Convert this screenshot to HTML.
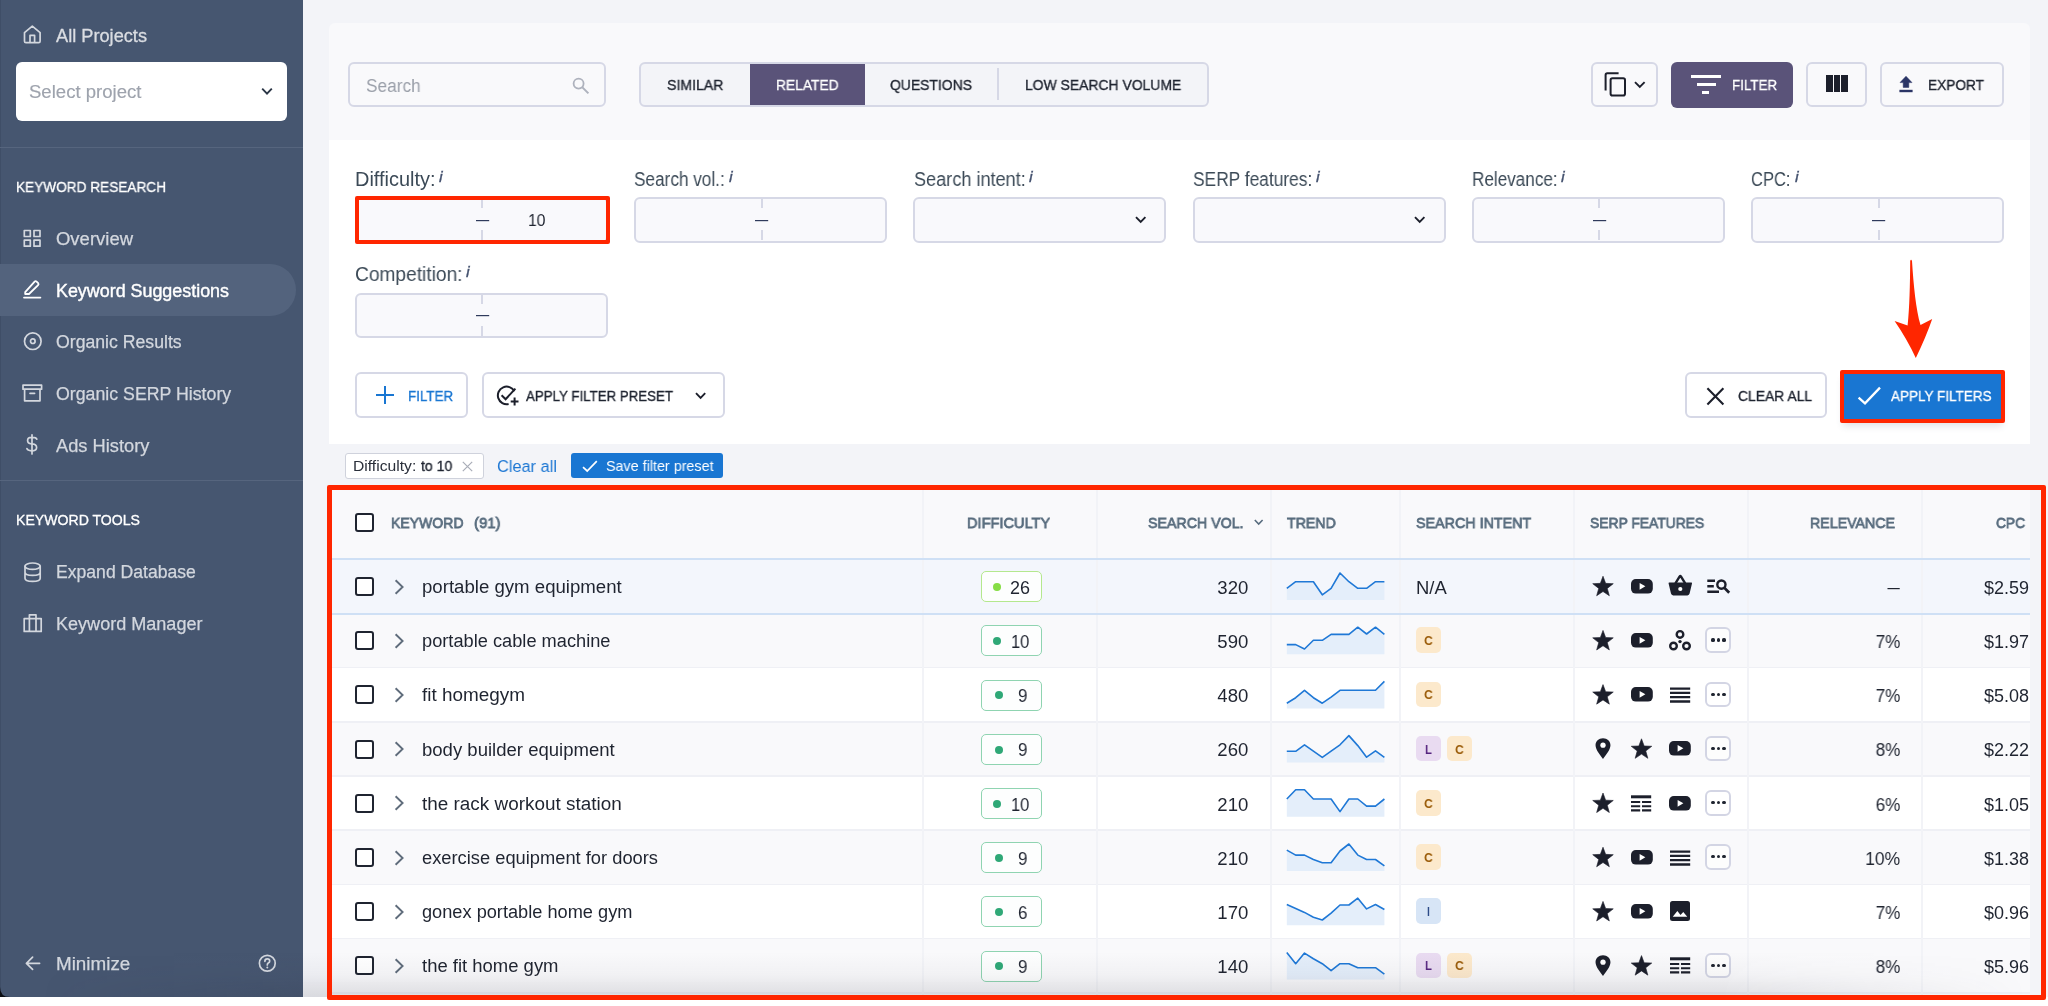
<!DOCTYPE html>
<html lang="en">
<head>
<meta charset="utf-8">
<title>Keyword Suggestions</title>
<style>
*{box-sizing:border-box;margin:0;padding:0}
html,body{width:2048px;height:1006px;overflow:hidden;background:#fff}
body{font-family:"Liberation Sans",sans-serif;color:#1f2430;position:relative}
.a{position:absolute}
.t{position:absolute;white-space:nowrap;line-height:1;display:block;will-change:transform}
svg{position:absolute;overflow:visible}
#app{position:absolute;left:0;top:0;width:2048px;height:997px;background:#f3f4f8;overflow:hidden}
#side{position:absolute;left:0;top:0;width:303px;height:997px;background:#465670}
.inp{position:absolute;height:45.6px;width:253px;border:2px solid #d6d8e6;border-radius:6px;background:#f9f9fc}
.tick{position:absolute;width:2px;background:#d6d8e6}
.dash{position:absolute;height:1.7px;width:13px;background:#2f3a5c}
.btn{position:absolute;border:2px solid #d6d8e6;border-radius:6px;background:#fff}
.cb{position:absolute;width:19px;height:19px;border:2px solid #1f2430;border-radius:3px;background:#fff}
.row{position:absolute;left:332px;width:1698px}
.vs{position:absolute;width:2px;top:490px;height:507px;background:#f2f3f7}
.db{position:absolute;width:61.2px;height:31px;border:1.5px solid #8fd4b1;border-radius:5px;background:#fdfefe}
.dot{position:absolute;width:8px;height:8px;border-radius:50%;background:#2fa877}
.ib{position:absolute;width:25.8px;height:25.8px;border-radius:5px}
.more{position:absolute;width:25.6px;height:25.6px;border:2px solid #d3d5e4;border-radius:6px;background:rgba(255,255,255,.6)}
.more i{position:absolute;top:9.1px;width:3.2px;height:3.2px;border-radius:50%;background:#1f2430}
</style>
</head>
<body>
<div id="app">
<div id="side">
<div class="a" style="left:0;top:0;width:1px;height:997px;background:#3f4e67"></div>
<div class="a" style="left:0;top:264px;width:296px;height:52px;background:#53637d;border-radius:0 26px 26px 0"></div>
<div class="a" style="left:0;top:147px;width:303px;height:1px;background:#56657e"></div>
<div class="a" style="left:0;top:480px;width:303px;height:1px;background:#56657e"></div>
<div class="a" style="left:16px;top:62px;width:271px;height:59px;background:#fff;border-radius:6px"></div>
<svg style="left:261px;top:87px" width="12" height="9" viewBox="0 0 12 9"><path d="M1.2 1.6 L6 6.6 L10.8 1.6" fill="none" stroke="#2b3646" stroke-width="1.9"/></svg>
<span class="t" style="font-size:17.6px;color:#dadde2;top:28px;-webkit-text-stroke:0.3px #dadde2;left:56.00px;transform-origin:0 50%;transform:scaleX(1.0341);">All Projects</span>
<span class="t" style="font-size:17.6px;color:#9ea3ad;top:84px;-webkit-text-stroke:0.15px #9ea3ad;left:28.60px;transform-origin:0 50%;transform:scaleX(1.0545);">Select project</span>
<span class="t" style="font-size:14px;color:#ffffff;top:180px;-webkit-text-stroke:0.3px #ffffff;left:15.60px;transform-origin:0 50%;transform:scaleX(0.9738);">KEYWORD RESEARCH</span>
<span class="t" style="font-size:17.6px;color:#d3d7de;top:231px;-webkit-text-stroke:0.25px #d3d7de;left:56.00px;transform-origin:0 50%;transform:scaleX(1.0501);">Overview</span>
<span class="t" style="font-size:17.6px;color:#ffffff;top:283px;-webkit-text-stroke:0.4px #ffffff;left:56.00px;transform-origin:0 50%;transform:scaleX(1.0165);">Keyword Suggestions</span>
<span class="t" style="font-size:17.6px;color:#d3d7de;top:334px;-webkit-text-stroke:0.25px #d3d7de;left:56.00px;transform-origin:0 50%;transform:scaleX(1.0042);">Organic Results</span>
<span class="t" style="font-size:17.6px;color:#d3d7de;top:386px;-webkit-text-stroke:0.25px #d3d7de;left:56.00px;transform-origin:0 50%;transform:scaleX(1.0085);">Organic SERP History</span>
<span class="t" style="font-size:17.6px;color:#d3d7de;top:438px;-webkit-text-stroke:0.25px #d3d7de;left:56.00px;transform-origin:0 50%;transform:scaleX(1.0383);">Ads History</span>
<span class="t" style="font-size:14px;color:#ffffff;top:513px;-webkit-text-stroke:0.3px #ffffff;left:15.60px;transform-origin:0 50%;transform:scaleX(1.0066);">KEYWORD TOOLS</span>
<span class="t" style="font-size:17.6px;color:#d3d7de;top:564px;-webkit-text-stroke:0.25px #d3d7de;left:56.20px;transform-origin:0 50%;">Expand Database</span>
<span class="t" style="font-size:17.6px;color:#d3d7de;top:616px;-webkit-text-stroke:0.25px #d3d7de;left:56.20px;transform-origin:0 50%;transform:scaleX(1.0260);">Keyword Manager</span>
<span class="t" style="font-size:17.6px;color:#d3d7de;top:956px;-webkit-text-stroke:0.25px #d3d7de;left:56.20px;transform-origin:0 50%;transform:scaleX(1.0705);">Minimize</span>
<svg style="left:23px;top:25px" width="19" height="19" viewBox="0 0 19 19"><path d="M1.5 7.6 L9.3 1.2 L17.1 7.6 V16.2 Q17.1 17.6 15.7 17.6 H2.9 Q1.5 17.6 1.5 16.2 Z M7 17.6 V10.4 H11.6 V17.6" fill="none" stroke="#d3d7de" stroke-width="1.7" stroke-linejoin="round" stroke-linecap="round"/></svg>
<svg style="left:23px;top:229px" width="19" height="19" viewBox="0 0 19 19"><path d="M1.3 1.5h6v6h-6z M11 1.5h6v6h-6z M1.3 11.2h6v6h-6z M11 11.2h6v6h-6z" fill="none" stroke="#d3d7de" stroke-width="1.7" stroke-linejoin="round" stroke-linecap="round" stroke-linejoin="miter"/></svg>
<svg style="left:23px;top:279px" width="19" height="20" viewBox="0 0 19 20"><path d="M2.2 13.2 L11.6 2.6 Q12.6 1.6 13.6 2.6 L15.2 4.2 Q16 5.2 15.1 6.1 L6 15 H2.2 Z M1 18.6 H17.4" fill="none" stroke="#ffffff" stroke-width="1.8" stroke-linejoin="round" stroke-linecap="round"/></svg>
<svg style="left:22.5px;top:332px" width="20" height="19" viewBox="0 0 20 19"><circle cx="9.8" cy="9.2" r="8.3" fill="none" stroke="#d3d7de" stroke-width="1.7" stroke-linejoin="round" stroke-linecap="round"/><circle cx="9.8" cy="9.2" r="2.3" fill="none" stroke="#d3d7de" stroke-width="1.7" stroke-linejoin="round" stroke-linecap="round"/></svg>
<svg style="left:22px;top:383.5px" width="21" height="19" viewBox="0 0 21 19"><path d="M1 1.2 H19.6 V5.2 H1 Z M2.6 5.2 V16.8 H18 V5.2 M8 9.3 H12.6" fill="none" stroke="#d3d7de" stroke-width="1.7" stroke-linejoin="round" stroke-linecap="round" stroke-linejoin="miter"/></svg>
<svg style="left:25px;top:434px" width="14" height="21" viewBox="0 0 14 21"><path d="M7 0.8 V20 M11.8 5.2 Q11 3.4 7.4 3.4 H6.4 Q2.6 3.4 2.6 6.6 Q2.6 9.6 6.4 9.9 H7.6 Q11.6 10.3 11.6 13.6 Q11.6 16.8 7.6 16.8 H6.4 Q2.6 16.8 1.9 14.6" fill="none" stroke="#d3d7de" stroke-width="1.7" stroke-linejoin="round" stroke-linecap="round"/></svg>
<svg style="left:22.5px;top:561.5px" width="20" height="21" viewBox="0 0 20 21"><ellipse cx="9.6" cy="4.2" rx="7.6" ry="3.2" fill="none" stroke="#d3d7de" stroke-width="1.7" stroke-linejoin="round" stroke-linecap="round"/><path d="M2 4.2 V16.2 Q2 19.4 9.6 19.4 Q17.2 19.4 17.2 16.2 V4.2 M2 10.2 Q2 13.4 9.6 13.4 Q17.2 13.4 17.2 10.2" fill="none" stroke="#d3d7de" stroke-width="1.7" stroke-linejoin="round" stroke-linecap="round"/></svg>
<svg style="left:22.5px;top:613px" width="20" height="20" viewBox="0 0 20 20"><path d="M1.2 5.6 H18.2 V18.4 H1.2 Z M6.4 5.6 V1.8 H13 V5.6 M6.4 5.6 V18.4 M13 5.6 V18.4" fill="none" stroke="#d3d7de" stroke-width="1.7" stroke-linejoin="round" stroke-linecap="round"/></svg>
<svg style="left:24.5px;top:956px" width="16" height="15" viewBox="0 0 16 15"><path d="M14.6 7.3 H1.6 M7.6 1.2 L1.4 7.3 L7.6 13.4" fill="none" stroke="#d3d7de" stroke-width="1.7" stroke-linejoin="round" stroke-linecap="round"/></svg>
<svg style="left:257.5px;top:953.5px" width="19" height="19" viewBox="0 0 19 19"><circle cx="9.3" cy="9.2" r="7.9" fill="none" stroke="#d3d7de" stroke-width="1.7" stroke-linejoin="round" stroke-linecap="round"/><path d="M6.9 7.3 Q6.9 4.9 9.3 4.9 Q11.7 4.9 11.7 7 Q11.7 8.4 10.3 9.1 Q9.3 9.7 9.3 10.9" fill="none" stroke="#d3d7de" stroke-width="1.7" stroke-linejoin="round" stroke-linecap="round" stroke-width="1.5"/><circle cx="9.3" cy="13.4" r="1" fill="#d3d7de"/></svg>
</div>
<svg style="left:0;top:987px" width="10" height="10" viewBox="0 0 10 10"><path d="M0 0 V10 H10 Q0 10 0 0 Z" fill="#0b0d12"/></svg>
<div class="a" style="left:329px;top:23px;width:1701px;height:117px;background:#f9f9fb;border-radius:6px 6px 0 0"></div>
<div class="a" style="left:329px;top:139.5px;width:1701px;height:304.5px;background:#fff"></div>
<div class="a" style="left:347.8px;top:61.7px;width:258.4px;height:45.7px;border:2px solid #d6d8e6;border-radius:6px;background:#f9f9fb"></div>
<span class="t" style="font-size:18.8px;color:#9a9fa9;top:77px;left:366.00px;transform-origin:0 50%;transform:scaleX(0.9191);">Search</span>
<svg style="left:572px;top:77px" width="18" height="18" viewBox="0 0 18 18"><circle cx="6.6" cy="6.6" r="5" fill="none" stroke="#aeb2bd" stroke-width="1.8"/><path d="M10.4 10.4 L16.4 16.4" stroke="#aeb2bd" stroke-width="2"/></svg>
<div class="a" style="left:638.8px;top:61.7px;width:570.3px;height:45.7px;border:2px solid #d6d8e6;border-radius:6px;background:#f3f4f8"></div>
<div class="a" style="left:750px;top:63.7px;width:115px;height:41.7px;background:#5a5379"></div>
<div class="a" style="left:997px;top:68px;width:1.5px;height:32px;background:#d6d8e6"></div>
<span class="t" style="font-size:14.6px;color:#1f2430;top:78px;-webkit-text-stroke:0.35px #1f2430;left:666.50px;transform-origin:0 50%;transform:scaleX(0.9676);">SIMILAR</span>
<span class="t" style="font-size:14.6px;color:#ffffff;top:78px;-webkit-text-stroke:0.3px #ffffff;left:776.00px;transform-origin:0 50%;transform:scaleX(0.9436);">RELATED</span>
<span class="t" style="font-size:14.6px;color:#1f2430;top:78px;-webkit-text-stroke:0.35px #1f2430;left:890.00px;transform-origin:0 50%;transform:scaleX(0.9540);">QUESTIONS</span>
<span class="t" style="font-size:14.6px;color:#1f2430;top:78px;-webkit-text-stroke:0.35px #1f2430;left:1024.50px;transform-origin:0 50%;transform:scaleX(0.9538);">LOW SEARCH VOLUME</span>
<div class="btn" style="left:1591px;top:61.6px;width:67.2px;height:45.6px;background:#f9f9fb"></div>
<svg style="left:1604px;top:72px" width="23" height="25" viewBox="0 0 23 25"><path d="M1.6 18.4 V3 Q1.6 1.3 3.3 1.3 H14.6" fill="none" stroke="#1c1f2b" stroke-width="2"/><rect x="6.6" y="6.2" width="14.4" height="17.4" rx="1.8" fill="none" stroke="#1c1f2b" stroke-width="2"/></svg>
<svg style="left:1633.5px;top:80.5px" width="12" height="8" viewBox="0 0 12 8"><path d="M1 1.2 L5.8 6 L10.6 1.2" fill="none" stroke="#1c1f2b" stroke-width="1.9"/></svg>
<div class="a" style="left:1671px;top:61.5px;width:122px;height:46px;background:#5a5379;border-radius:6px"></div>
<div class="a" style="left:1691px;top:75px;width:29.5px;height:3px;background:#fff"></div>
<div class="a" style="left:1696.5px;top:83px;width:19px;height:3px;background:#fff"></div>
<div class="a" style="left:1702px;top:91px;width:7px;height:3px;background:#fff"></div>
<span class="t" style="font-size:14.6px;color:#ffffff;top:78px;-webkit-text-stroke:0.3px #ffffff;left:1732.00px;transform-origin:0 50%;transform:scaleX(0.9146);">FILTER</span>
<div class="btn" style="left:1805.8px;top:61.6px;width:60.9px;height:45.6px;background:#f9f9fb"></div>
<div class="a" style="left:1826.0px;top:74.8px;width:6.6px;height:17.2px;background:#1c1f2b"></div>
<div class="a" style="left:1833.6px;top:74.8px;width:6.6px;height:17.2px;background:#1c1f2b"></div>
<div class="a" style="left:1841.2px;top:74.8px;width:6.6px;height:17.2px;background:#1c1f2b"></div>
<div class="btn" style="left:1879.8px;top:61.6px;width:124.4px;height:45.6px;background:#f9f9fb"></div>
<svg style="left:1898.5px;top:75.5px" width="14" height="17" viewBox="0 0 14 17"><path d="M7 0.2 L13 6.6 H9.8 V11.4 H4.2 V6.6 H1 Z" fill="#2b3566" stroke="#2b3566" stroke-width="0.5" stroke-linejoin="round"/><rect x="0.4" y="13.8" width="13.2" height="2.4" fill="#2b3566"/></svg>
<span class="t" style="font-size:14.6px;color:#1f2430;top:78px;-webkit-text-stroke:0.35px #1f2430;left:1928.00px;transform-origin:0 50%;transform:scaleX(0.9372);">EXPORT</span>
<span class="t" style="font-size:19.6px;color:#3c4a57;top:170px;left:355.15px;transform-origin:0 50%;transform:scaleX(1.0174);">Difficulty:</span>
<span class="t" style="font-size:15px;color:#44526f;top:169px;font-style:italic;-webkit-text-stroke:0.3px #44526f;left:439.25px;transform-origin:0 50%;transform:scaleX(1.1000);">i</span>
<span class="t" style="font-size:19.6px;color:#3c4a57;top:170px;left:634.40px;transform-origin:0 50%;transform:scaleX(0.8771);">Search vol.:</span>
<span class="t" style="font-size:15px;color:#44526f;top:169px;font-style:italic;-webkit-text-stroke:0.3px #44526f;left:728.75px;transform-origin:0 50%;transform:scaleX(1.1000);">i</span>
<span class="t" style="font-size:19.6px;color:#3c4a57;top:170px;left:913.65px;transform-origin:0 50%;transform:scaleX(0.9243);">Search intent:</span>
<span class="t" style="font-size:15px;color:#44526f;top:169px;font-style:italic;-webkit-text-stroke:0.3px #44526f;left:1029.00px;transform-origin:0 50%;transform:scaleX(1.1000);">i</span>
<span class="t" style="font-size:19.6px;color:#3c4a57;top:170px;left:1192.90px;transform-origin:0 50%;transform:scaleX(0.8853);">SERP features:</span>
<span class="t" style="font-size:15px;color:#44526f;top:169px;font-style:italic;-webkit-text-stroke:0.3px #44526f;left:1315.75px;transform-origin:0 50%;transform:scaleX(1.1000);">i</span>
<span class="t" style="font-size:19.6px;color:#3c4a57;top:170px;left:1472.15px;transform-origin:0 50%;transform:scaleX(0.8732);">Relevance:</span>
<span class="t" style="font-size:15px;color:#44526f;top:169px;font-style:italic;-webkit-text-stroke:0.3px #44526f;left:1561.35px;transform-origin:0 50%;transform:scaleX(1.1000);">i</span>
<span class="t" style="font-size:19.6px;color:#3c4a57;top:170px;left:1751.40px;transform-origin:0 50%;transform:scaleX(0.8435);">CPC:</span>
<span class="t" style="font-size:15px;color:#44526f;top:169px;font-style:italic;-webkit-text-stroke:0.3px #44526f;left:1794.50px;transform-origin:0 50%;transform:scaleX(1.1000);">i</span>
<span class="t" style="font-size:19.6px;color:#3c4a57;top:265px;left:355.10px;transform-origin:0 50%;transform:scaleX(0.9773);">Competition:</span>
<span class="t" style="font-size:15px;color:#44526f;top:264px;font-style:italic;-webkit-text-stroke:0.3px #44526f;left:466.40px;transform-origin:0 50%;transform:scaleX(1.1000);">i</span>
<div class="inp" style="left:354.75px;top:197px"></div>
<div class="tick" style="left:481.25px;top:199px;height:9px"></div>
<div class="tick" style="left:481.25px;top:230px;height:10px"></div>
<span class="t" style="font-size:17.6px;color:#2f3a5c;top:211px;left:475.65px;transform-origin:0 50%;transform:scaleX(1.3474);">–</span>
<div class="inp" style="left:634px;top:197px"></div>
<div class="tick" style="left:760.5px;top:199px;height:9px"></div>
<div class="tick" style="left:760.5px;top:230px;height:10px"></div>
<span class="t" style="font-size:17.6px;color:#2f3a5c;top:211px;left:754.90px;transform-origin:0 50%;transform:scaleX(1.3474);">–</span>
<div class="inp" style="left:913.25px;top:197px"></div>
<svg style="left:1134.75px;top:215.6px" width="12" height="8" viewBox="0 0 12 8"><path d="M1 1.2 L5.7 5.9 L10.4 1.2" fill="none" stroke="#1c1f2b" stroke-width="1.9"/></svg>
<div class="inp" style="left:1192.5px;top:197px"></div>
<svg style="left:1414.0px;top:215.6px" width="12" height="8" viewBox="0 0 12 8"><path d="M1 1.2 L5.7 5.9 L10.4 1.2" fill="none" stroke="#1c1f2b" stroke-width="1.9"/></svg>
<div class="inp" style="left:1471.75px;top:197px"></div>
<div class="tick" style="left:1598.25px;top:199px;height:9px"></div>
<div class="tick" style="left:1598.25px;top:230px;height:10px"></div>
<span class="t" style="font-size:17.6px;color:#2f3a5c;top:211px;left:1592.65px;transform-origin:0 50%;transform:scaleX(1.3474);">–</span>
<div class="inp" style="left:1751px;top:197px"></div>
<div class="tick" style="left:1877.5px;top:199px;height:9px"></div>
<div class="tick" style="left:1877.5px;top:230px;height:10px"></div>
<span class="t" style="font-size:17.6px;color:#2f3a5c;top:211px;left:1871.90px;transform-origin:0 50%;transform:scaleX(1.3474);">–</span>
<div class="inp" style="left:354.75px;top:292.5px"></div>
<div class="tick" style="left:481.25px;top:294.5px;height:9px"></div>
<div class="tick" style="left:481.25px;top:325.5px;height:10px"></div>
<span class="t" style="font-size:17.6px;color:#2f3a5c;top:306px;left:475.65px;transform-origin:0 50%;transform:scaleX(1.3474);">–</span>
<div class="a" style="left:355px;top:195.8px;width:255px;height:48.6px;border:4.2px solid #ff2600;border-radius:2px"></div>
<span class="t" style="font-size:16.8px;color:#1f2430;top:213px;left:528.00px;transform-origin:0 50%;transform:scaleX(0.9372);">10</span>
<div class="btn" style="left:354.8px;top:372.1px;width:113.4px;height:46px"></div>
<div class="a" style="left:376px;top:393.8px;width:18px;height:2.5px;background:#1976d2"></div><div class="a" style="left:383.8px;top:386px;width:2.5px;height:18px;background:#1976d2"></div>
<span class="t" style="font-size:14.6px;color:#1976d2;top:389px;-webkit-text-stroke:0.35px #1976d2;left:407.50px;transform-origin:0 50%;transform:scaleX(0.9146);">FILTER</span>
<div class="btn" style="left:481.5px;top:372.1px;width:243.4px;height:46px"></div>
<svg style="left:496px;top:385px" width="24" height="22" viewBox="0 0 24 22"><path d="M18.4 6.2 A8.8 8.8 0 1 0 12.6 19" fill="none" stroke="#1c1f2b" stroke-width="2"/><path d="M5.6 10.2 L9.6 14.2 L19.4 3.6" fill="none" stroke="#1c1f2b" stroke-width="2"/><path d="M18.6 12.6 V20.4 M14.7 16.5 H22.5" stroke="#1c1f2b" stroke-width="2"/></svg>
<span class="t" style="font-size:14.6px;color:#1f2430;top:389px;-webkit-text-stroke:0.35px #1f2430;left:526.00px;transform-origin:0 50%;transform:scaleX(0.9107);">APPLY FILTER PRESET</span>
<svg style="left:694.5px;top:391.5px" width="12" height="8" viewBox="0 0 12 8"><path d="M1 1.2 L5.6 5.8 L10.2 1.2" fill="none" stroke="#1c1f2b" stroke-width="1.9"/></svg>
<div class="btn" style="left:1685.3px;top:372.1px;width:141.4px;height:46px"></div>
<svg style="left:1706px;top:386.5px" width="19" height="19" viewBox="0 0 19 19"><path d="M1.4 1.2 L17.4 17.6 M17.4 1.2 L1.4 17.6" stroke="#1c1f2b" stroke-width="2.1"/></svg>
<span class="t" style="font-size:14.6px;color:#1f2430;top:389px;-webkit-text-stroke:0.35px #1f2430;left:1737.75px;transform-origin:0 50%;transform:scaleX(0.9501);">CLEAR ALL</span>
<div class="a" style="left:1840px;top:370.4px;width:165.4px;height:52.4px;background:#1976d2;border:4px solid #ff2600;border-radius:2px;box-shadow:0 6px 7px -3px rgba(60,70,100,.16)"></div>
<svg style="left:1857px;top:386px" width="25" height="20" viewBox="0 0 25 20"><path d="M1.6 11.6 L8 17.4 L23 1.6" fill="none" stroke="#fff" stroke-width="2.3"/></svg>
<span class="t" style="font-size:14.6px;color:#ffffff;top:389px;-webkit-text-stroke:0.3px #ffffff;left:1891.00px;transform-origin:0 50%;transform:scaleX(0.9247);">APPLY FILTERS</span>
<svg style="left:1890px;top:255px" width="50" height="108" viewBox="0 0 50 108"><path d="M20.2 6 Q21 3.6 22 6 C23.5 30 26 55 30.5 70 L42.2 64 Q36 82 25.8 103 Q17 84 4.6 66 L17.6 70.5 C19.6 52 20 30 20.2 6 Z" fill="#ff2600"/></svg>
<div class="a" style="left:345px;top:453px;width:139px;height:25.5px;border:1px solid #cfd2dc;border-radius:3px;background:#fff"></div>
<span class="t" style="font-size:14.8px;color:#2a2f3a;top:459px;left:352.50px;transform-origin:0 50%;transform:scaleX(1.0583);">Difficulty:</span>
<span class="t" style="font-size:14.8px;color:#1f2430;top:459px;-webkit-text-stroke:0.35px #1f2430;left:421.25px;transform-origin:0 50%;transform:scaleX(0.9492);">to 10</span>
<svg style="left:462px;top:460.5px" width="11" height="11" viewBox="0 0 11 11"><path d="M0.8 0.8 L10.2 10.2 M10.2 0.8 L0.8 10.2" stroke="#a9adb8" stroke-width="1.2"/></svg>
<span class="t" style="font-size:17.2px;color:#1b76d3;top:458px;left:497.00px;transform-origin:0 50%;transform:scaleX(0.9517);">Clear all</span>
<div class="a" style="left:571px;top:453px;width:151.8px;height:25.4px;background:#1976d2;border-radius:3px"></div>
<svg style="left:582px;top:459.5px" width="16" height="13" viewBox="0 0 16 13"><path d="M1 7.2 L5.2 11 L14.8 1.2" fill="none" stroke="#fff" stroke-width="1.7"/></svg>
<span class="t" style="font-size:14.8px;color:#ffffff;top:459px;left:605.75px;transform-origin:0 50%;transform:scaleX(0.9682);">Save filter preset</span>
<div class="a" style="left:332px;top:490px;width:1698px;height:68px;background:#f9f9fb"></div>
<div class="row" style="top:560.0px;height:55.2px;background:#f3f6fc"></div>
<div class="row" style="top:614.2px;height:55.2px;background:#f9f9fb"></div>
<div class="row" style="top:668.4px;height:55.2px;background:#ffffff"></div>
<div class="row" style="top:722.6px;height:55.2px;background:#f9f9fb"></div>
<div class="row" style="top:776.8px;height:55.2px;background:#ffffff"></div>
<div class="row" style="top:831.0px;height:55.2px;background:#f9f9fb"></div>
<div class="row" style="top:885.2px;height:55.2px;background:#ffffff"></div>
<div class="row" style="top:939.4px;height:55.2px;background:#f9f9fb"></div>
<div class="a" style="left:332px;top:666.8px;width:1698px;height:1.6px;background:#eff0f5"></div>
<div class="a" style="left:332px;top:721.0px;width:1698px;height:1.6px;background:#eff0f5"></div>
<div class="a" style="left:332px;top:775.2px;width:1698px;height:1.6px;background:#eff0f5"></div>
<div class="a" style="left:332px;top:829.4px;width:1698px;height:1.6px;background:#eff0f5"></div>
<div class="a" style="left:332px;top:883.6px;width:1698px;height:1.6px;background:#eff0f5"></div>
<div class="a" style="left:332px;top:937.8px;width:1698px;height:1.6px;background:#eff0f5"></div>
<div class="a" style="left:332px;top:992.0px;width:1698px;height:1.6px;background:#eff0f5"></div>
<div class="vs" style="left:922px"></div>
<div class="vs" style="left:1096px"></div>
<div class="vs" style="left:1270px"></div>
<div class="vs" style="left:1399px"></div>
<div class="vs" style="left:1573px"></div>
<div class="vs" style="left:1747px"></div>
<div class="vs" style="left:1921px"></div>
<div class="a" style="left:332px;top:557.6px;width:1698px;height:2px;background:#cfe0f5"></div>
<div class="a" style="left:332px;top:613px;width:1698px;height:2px;background:#cfe0f5"></div>
<div class="cb" style="left:355px;top:513px"></div>
<span class="t" style="font-size:15.4px;color:#586c7e;top:515px;-webkit-text-stroke:0.8px #586c7e;left:391.25px;transform-origin:0 50%;transform:scaleX(0.9116);">KEYWORD</span>
<span class="t" style="font-size:15.4px;color:#586c7e;top:515px;-webkit-text-stroke:0.8px #586c7e;left:474.00px;transform-origin:0 50%;transform:scaleX(0.9680);">(91)</span>
<span class="t" style="font-size:15.4px;color:#586c7e;top:515px;-webkit-text-stroke:0.8px #586c7e;left:967.00px;transform-origin:0 50%;transform:scaleX(0.9482);">DIFFICULTY</span>
<span class="t" style="font-size:15.4px;color:#586c7e;top:515px;-webkit-text-stroke:0.8px #586c7e;left:1147.75px;transform-origin:0 50%;transform:scaleX(0.9227);">SEARCH VOL.</span>
<svg style="left:1254px;top:519px" width="10" height="7" viewBox="0 0 10 7"><path d="M0.8 1 L4.7 5 L8.6 1" fill="none" stroke="#586c7e" stroke-width="1.6"/></svg>
<span class="t" style="font-size:15.4px;color:#586c7e;top:515px;-webkit-text-stroke:0.8px #586c7e;left:1286.75px;transform-origin:0 50%;transform:scaleX(0.9195);">TREND</span>
<span class="t" style="font-size:15.4px;color:#586c7e;top:515px;-webkit-text-stroke:0.8px #586c7e;left:1415.50px;transform-origin:0 50%;transform:scaleX(0.9294);">SEARCH INTENT</span>
<span class="t" style="font-size:15.4px;color:#586c7e;top:515px;-webkit-text-stroke:0.8px #586c7e;left:1589.50px;transform-origin:0 50%;transform:scaleX(0.9006);">SERP FEATURES</span>
<span class="t" style="font-size:15.4px;color:#586c7e;top:515px;-webkit-text-stroke:0.8px #586c7e;left:1810.00px;transform-origin:0 50%;transform:scaleX(0.9230);">RELEVANCE</span>
<span class="t" style="font-size:15.4px;color:#586c7e;top:515px;-webkit-text-stroke:0.8px #586c7e;left:1995.50px;transform-origin:0 50%;transform:scaleX(0.8923);">CPC</span>
<div class="cb" style="left:355px;top:577.0px"></div>
<svg style="left:394px;top:578.6px" width="11" height="16" viewBox="0 0 11 16"><path d="M1.6 1.2 L8.6 8 L1.6 14.8" fill="none" stroke="#5f6c7b" stroke-width="1.9"/></svg>
<span class="t" style="font-size:17.6px;color:#1f2430;top:579px;left:422.00px;transform-origin:0 50%;transform:scaleX(1.0582);">portable gym equipment</span>
<div class="db" style="left:980.8px;top:571.1px;border-color:#b4e88e"></div>
<div class="dot" style="left:992.5px;top:583.0px;background:#86dd45"></div>
<span class="t" style="font-size:17.6px;color:#1f2430;top:580px;left:1010.30px;transform-origin:0 50%;transform:scaleX(1.0215);">26</span>
<span class="t" style="font-size:17.6px;color:#1f2430;top:580px;right:799.20px;transform-origin:100% 50%;transform:scaleX(1.0559);">320</span>
<svg style="left:0;top:0" width="1" height="1"><polygon points="1286.8,600.0 1286.8,588.3 1295.7,581.7 1304.5,581.7 1313.4,581.7 1322.3,594.8 1331.1,588.3 1340.0,573.0 1348.9,581.7 1357.8,588.3 1366.6,588.3 1375.5,581.7 1384.4,581.7 1384.4,600.0" fill="#e4eefa"/><polyline points="1286.8,588.3 1295.7,581.7 1304.5,581.7 1313.4,581.7 1322.3,594.8 1331.1,588.3 1340.0,573.0 1348.9,581.7 1357.8,588.3 1366.6,588.3 1375.5,581.7 1384.4,581.7" fill="none" stroke="#1f78d6" stroke-width="1.6" stroke-linejoin="round"/></svg>
<span class="t" style="font-size:17.6px;color:#1f2430;top:580px;left:1415.50px;transform-origin:0 50%;transform:scaleX(1.0479);">N/A</span>
<svg style="left:0;top:0" width="1" height="1"><polygon points="1603.00,576.20 1605.65,583.36 1613.27,583.66 1607.28,588.39 1609.35,595.74 1603.00,591.50 1596.65,595.74 1598.72,588.39 1592.73,583.66 1600.35,583.36" fill="#1c1f2b" stroke="#1c1f2b" stroke-width="0.6" stroke-linejoin="round"/></svg>
<svg style="left:1630.50px;top:578.70px" width="22" height="15" viewBox="0 0 22 15"><rect x="0" y="0" width="21.8" height="14.6" rx="4.8" fill="#1c1f2b"/><path d="M8.6 3.9 L14.4 7.3 L8.6 10.7 Z" fill="#fff"/></svg>
<svg style="left:1668.00px;top:575.20px" width="24.6" height="21" viewBox="0 0 24.6 21"><path d="M1.2 7.6 H23.4 Q24.2 7.6 24 8.6 L21.6 18.6 Q21.2 20.4 19.4 20.4 H5.2 Q3.4 20.4 3 18.6 L0.6 8.6 Q0.4 7.6 1.2 7.6 Z" fill="#1c1f2b"/><path d="M7.4 8.4 L11.7 1.4 Q12.3 0.6 12.9 1.4 L17.2 8.4" fill="none" stroke="#1c1f2b" stroke-width="2.4" stroke-linejoin="round"/><circle cx="12.3" cy="14" r="2.1" fill="#fff"/></svg>
<svg style="left:1707.20px;top:579.10px" width="23" height="15" viewBox="0 0 23 15"><path d="M0.3 1.8 H8 M0.3 7.2 H6.8 M0.3 12.8 H12" stroke="#1c1f2b" stroke-width="2.4"/><circle cx="14.4" cy="5.6" r="4.1" fill="none" stroke="#1c1f2b" stroke-width="2.4"/><path d="M17.2 8.6 L22.2 13.8" stroke="#1c1f2b" stroke-width="2.8"/></svg>
<span class="t" style="font-size:17.6px;color:#1f2430;top:579px;right:148.00px;transform-origin:100% 50%;transform:scaleX(1.2759);">–</span>
<span class="t" style="font-size:17.6px;color:#1f2430;top:580px;right:18.50px;transform-origin:100% 50%;transform:scaleX(1.0220);">$2.59</span>
<div class="cb" style="left:355px;top:631.2px"></div>
<svg style="left:394px;top:632.8px" width="11" height="16" viewBox="0 0 11 16"><path d="M1.6 1.2 L8.6 8 L1.6 14.8" fill="none" stroke="#5f6c7b" stroke-width="1.9"/></svg>
<span class="t" style="font-size:17.6px;color:#1f2430;top:633px;left:422.00px;transform-origin:0 50%;transform:scaleX(1.0362);">portable cable machine</span>
<div class="db" style="left:980.8px;top:625.3px;border-color:#8fd4b1"></div>
<div class="dot" style="left:992.5px;top:637.2px;background:#2fa877"></div>
<span class="t" style="font-size:17.6px;color:#1f2430;top:634px;left:1011.20px;transform-origin:0 50%;transform:scaleX(0.9347);">10</span>
<span class="t" style="font-size:17.6px;color:#1f2430;top:634px;right:799.20px;transform-origin:100% 50%;transform:scaleX(1.0559);">590</span>
<svg style="left:0;top:0" width="1" height="1"><polygon points="1286.8,654.2 1286.8,644.6 1295.7,644.6 1304.5,649.0 1313.4,640.3 1322.3,640.3 1331.1,634.4 1340.0,634.4 1348.9,634.4 1357.8,627.2 1366.6,634.0 1375.5,627.2 1384.4,634.4 1384.4,654.2" fill="#e4eefa"/><polyline points="1286.8,644.6 1295.7,644.6 1304.5,649.0 1313.4,640.3 1322.3,640.3 1331.1,634.4 1340.0,634.4 1348.9,634.4 1357.8,627.2 1366.6,634.0 1375.5,627.2 1384.4,634.4" fill="none" stroke="#1f78d6" stroke-width="1.6" stroke-linejoin="round"/></svg>
<div class="ib" style="left:1415.6px;top:627.3px;background:#fce9cc"></div>
<span class="t" style="font-size:13.2px;color:#9a5b08;top:634px;font-weight:700;left:1424.10px;transform-origin:0 50%;transform:scaleX(0.9233);">C</span>
<svg style="left:0;top:0" width="1" height="1"><polygon points="1603.00,630.40 1605.65,637.56 1613.27,637.86 1607.28,642.59 1609.35,649.94 1603.00,645.70 1596.65,649.94 1598.72,642.59 1592.73,637.86 1600.35,637.56" fill="#1c1f2b" stroke="#1c1f2b" stroke-width="0.6" stroke-linejoin="round"/></svg>
<svg style="left:1630.50px;top:632.90px" width="22" height="15" viewBox="0 0 22 15"><rect x="0" y="0" width="21.8" height="14.6" rx="4.8" fill="#1c1f2b"/><path d="M8.6 3.9 L14.4 7.3 L8.6 10.7 Z" fill="#fff"/></svg>
<svg style="left:1669.20px;top:630.20px" width="22" height="21" viewBox="0 0 22 21"><circle cx="11" cy="4.4" r="3.3" fill="none" stroke="#1c1f2b" stroke-width="2.4"/><circle cx="4.5" cy="16" r="3.3" fill="none" stroke="#1c1f2b" stroke-width="2.4"/><circle cx="17.5" cy="16" r="3.3" fill="none" stroke="#1c1f2b" stroke-width="2.4"/><circle cx="11" cy="11.6" r="1.7" fill="#1c1f2b"/></svg>
<div class="more" style="left:1705.10px;top:627.40px"><i style="left:4.4px"></i><i style="left:9.9px"></i><i style="left:15.4px"></i></div>
<span class="t" style="font-size:17.6px;color:#1f2430;top:634px;right:147.50px;transform-origin:100% 50%;transform:scaleX(0.9730);">7%</span>
<span class="t" style="font-size:17.6px;color:#1f2430;top:634px;right:18.50px;transform-origin:100% 50%;transform:scaleX(1.0220);">$1.97</span>
<div class="cb" style="left:355px;top:685.4px"></div>
<svg style="left:394px;top:687.0px" width="11" height="16" viewBox="0 0 11 16"><path d="M1.6 1.2 L8.6 8 L1.6 14.8" fill="none" stroke="#5f6c7b" stroke-width="1.9"/></svg>
<span class="t" style="font-size:17.6px;color:#1f2430;top:687px;left:422.00px;transform-origin:0 50%;transform:scaleX(1.0748);">fit homegym</span>
<div class="db" style="left:980.8px;top:679.5px;border-color:#8fd4b1"></div>
<div class="dot" style="left:995px;top:691.4px;background:#2fa877"></div>
<span class="t" style="font-size:17.6px;color:#1f2430;top:688px;left:1018.20px;transform-origin:0 50%;transform:scaleX(0.9595);">9</span>
<span class="t" style="font-size:17.6px;color:#1f2430;top:688px;right:799.20px;transform-origin:100% 50%;transform:scaleX(1.0559);">480</span>
<svg style="left:0;top:0" width="1" height="1"><polygon points="1286.8,708.4 1286.8,703.2 1295.7,697.7 1304.5,690.3 1313.4,697.7 1322.3,703.2 1331.1,697.1 1340.0,690.3 1348.9,690.3 1357.8,690.3 1366.6,690.3 1375.5,690.3 1384.4,681.4 1384.4,708.4" fill="#e4eefa"/><polyline points="1286.8,703.2 1295.7,697.7 1304.5,690.3 1313.4,697.7 1322.3,703.2 1331.1,697.1 1340.0,690.3 1348.9,690.3 1357.8,690.3 1366.6,690.3 1375.5,690.3 1384.4,681.4" fill="none" stroke="#1f78d6" stroke-width="1.6" stroke-linejoin="round"/></svg>
<div class="ib" style="left:1415.6px;top:681.5px;background:#fce9cc"></div>
<span class="t" style="font-size:13.2px;color:#9a5b08;top:688px;font-weight:700;left:1424.10px;transform-origin:0 50%;transform:scaleX(0.9233);">C</span>
<svg style="left:0;top:0" width="1" height="1"><polygon points="1603.00,684.60 1605.65,691.76 1613.27,692.06 1607.28,696.79 1609.35,704.14 1603.00,699.90 1596.65,704.14 1598.72,696.79 1592.73,692.06 1600.35,691.76" fill="#1c1f2b" stroke="#1c1f2b" stroke-width="0.6" stroke-linejoin="round"/></svg>
<svg style="left:1630.50px;top:687.10px" width="22" height="15" viewBox="0 0 22 15"><rect x="0" y="0" width="21.8" height="14.6" rx="4.8" fill="#1c1f2b"/><path d="M8.6 3.9 L14.4 7.3 L8.6 10.7 Z" fill="#fff"/></svg>
<svg style="left:1669.90px;top:686.90px" width="20.2" height="16" viewBox="0 0 20.2 16"><path d="M0 1.6 H20.2 M0 5.9 H20.2 M0 10.2 H20.2 M0 14.5 H20.2" stroke="#1c1f2b" stroke-width="2.3"/></svg>
<div class="more" style="left:1705.10px;top:681.60px"><i style="left:4.4px"></i><i style="left:9.9px"></i><i style="left:15.4px"></i></div>
<span class="t" style="font-size:17.6px;color:#1f2430;top:688px;right:147.50px;transform-origin:100% 50%;transform:scaleX(0.9730);">7%</span>
<span class="t" style="font-size:17.6px;color:#1f2430;top:688px;right:18.50px;transform-origin:100% 50%;transform:scaleX(1.0220);">$5.08</span>
<div class="cb" style="left:355px;top:739.6px"></div>
<svg style="left:394px;top:741.2px" width="11" height="16" viewBox="0 0 11 16"><path d="M1.6 1.2 L8.6 8 L1.6 14.8" fill="none" stroke="#5f6c7b" stroke-width="1.9"/></svg>
<span class="t" style="font-size:17.6px;color:#1f2430;top:742px;left:422.00px;transform-origin:0 50%;transform:scaleX(1.0535);">body builder equipment</span>
<div class="db" style="left:980.8px;top:733.7px;border-color:#8fd4b1"></div>
<div class="dot" style="left:995px;top:745.6px;background:#2fa877"></div>
<span class="t" style="font-size:17.6px;color:#1f2430;top:742px;left:1018.20px;transform-origin:0 50%;transform:scaleX(0.9595);">9</span>
<span class="t" style="font-size:17.6px;color:#1f2430;top:742px;right:799.20px;transform-origin:100% 50%;transform:scaleX(1.0559);">260</span>
<svg style="left:0;top:0" width="1" height="1"><polygon points="1286.8,762.6 1286.8,751.3 1295.7,751.3 1304.5,744.8 1313.4,751.1 1322.3,757.4 1331.1,751.1 1340.0,744.8 1348.9,735.6 1357.8,745.6 1366.6,757.2 1375.5,750.9 1384.4,757.4 1384.4,762.6" fill="#e4eefa"/><polyline points="1286.8,751.3 1295.7,751.3 1304.5,744.8 1313.4,751.1 1322.3,757.4 1331.1,751.1 1340.0,744.8 1348.9,735.6 1357.8,745.6 1366.6,757.2 1375.5,750.9 1384.4,757.4" fill="none" stroke="#1f78d6" stroke-width="1.6" stroke-linejoin="round"/></svg>
<div class="ib" style="left:1415.6px;top:735.7px;background:#e9dbf1"></div>
<span class="t" style="font-size:13.2px;color:#55247f;top:743px;font-weight:700;left:1425.10px;transform-origin:0 50%;transform:scaleX(0.8434);">L</span>
<div class="ib" style="left:1446.6px;top:735.7px;background:#fce9cc"></div>
<span class="t" style="font-size:13.2px;color:#9a5b08;top:743px;font-weight:700;left:1455.10px;transform-origin:0 50%;transform:scaleX(0.9233);">C</span>
<svg style="left:1595.00px;top:737.90px" width="16" height="21.4" viewBox="0 0 15 21" preserveAspectRatio="none"><path d="M7.5 0.3 C3.4 0.3 0.5 3.3 0.5 7.2 C0.5 12 5.6 17.6 7.5 20.6 C9.4 17.6 14.5 12 14.5 7.2 C14.5 3.3 11.6 0.3 7.5 0.3 Z" fill="#1c1f2b"/><circle cx="7.5" cy="7" r="2.5" fill="#fff"/></svg>
<svg style="left:0;top:0" width="1" height="1"><polygon points="1641.50,738.80 1644.15,745.96 1651.77,746.26 1645.78,750.99 1647.85,758.34 1641.50,754.10 1635.15,758.34 1637.22,750.99 1631.23,746.26 1638.85,745.96" fill="#1c1f2b" stroke="#1c1f2b" stroke-width="0.6" stroke-linejoin="round"/></svg>
<svg style="left:1669.00px;top:741.30px" width="22" height="15" viewBox="0 0 22 15"><rect x="0" y="0" width="21.8" height="14.6" rx="4.8" fill="#1c1f2b"/><path d="M8.6 3.9 L14.4 7.3 L8.6 10.7 Z" fill="#fff"/></svg>
<div class="more" style="left:1705.10px;top:735.80px"><i style="left:4.4px"></i><i style="left:9.9px"></i><i style="left:15.4px"></i></div>
<span class="t" style="font-size:17.6px;color:#1f2430;top:742px;right:147.50px;transform-origin:100% 50%;transform:scaleX(0.9730);">8%</span>
<span class="t" style="font-size:17.6px;color:#1f2430;top:742px;right:18.50px;transform-origin:100% 50%;transform:scaleX(1.0220);">$2.22</span>
<div class="cb" style="left:355px;top:793.8px"></div>
<svg style="left:394px;top:795.4px" width="11" height="16" viewBox="0 0 11 16"><path d="M1.6 1.2 L8.6 8 L1.6 14.8" fill="none" stroke="#5f6c7b" stroke-width="1.9"/></svg>
<span class="t" style="font-size:17.6px;color:#1f2430;top:796px;left:422.00px;transform-origin:0 50%;transform:scaleX(1.0747);">the rack workout station</span>
<div class="db" style="left:980.8px;top:787.9px;border-color:#8fd4b1"></div>
<div class="dot" style="left:992.5px;top:799.8px;background:#2fa877"></div>
<span class="t" style="font-size:17.6px;color:#1f2430;top:797px;left:1011.20px;transform-origin:0 50%;transform:scaleX(0.9347);">10</span>
<span class="t" style="font-size:17.6px;color:#1f2430;top:797px;right:799.20px;transform-origin:100% 50%;transform:scaleX(1.0559);">210</span>
<svg style="left:0;top:0" width="1" height="1"><polygon points="1286.8,816.8 1286.8,799.0 1295.7,789.8 1304.5,789.8 1313.4,799.0 1322.3,799.0 1331.1,799.0 1340.0,811.6 1348.9,799.0 1357.8,799.0 1366.6,806.1 1375.5,806.1 1384.4,799.0 1384.4,816.8" fill="#e4eefa"/><polyline points="1286.8,799.0 1295.7,789.8 1304.5,789.8 1313.4,799.0 1322.3,799.0 1331.1,799.0 1340.0,811.6 1348.9,799.0 1357.8,799.0 1366.6,806.1 1375.5,806.1 1384.4,799.0" fill="none" stroke="#1f78d6" stroke-width="1.6" stroke-linejoin="round"/></svg>
<div class="ib" style="left:1415.6px;top:789.9px;background:#fce9cc"></div>
<span class="t" style="font-size:13.2px;color:#9a5b08;top:797px;font-weight:700;left:1424.10px;transform-origin:0 50%;transform:scaleX(0.9233);">C</span>
<svg style="left:0;top:0" width="1" height="1"><polygon points="1603.00,793.00 1605.65,800.16 1613.27,800.46 1607.28,805.19 1609.35,812.54 1603.00,808.30 1596.65,812.54 1598.72,805.19 1592.73,800.46 1600.35,800.16" fill="#1c1f2b" stroke="#1c1f2b" stroke-width="0.6" stroke-linejoin="round"/></svg>
<svg style="left:1631.40px;top:794.80px" width="20.2" height="17" viewBox="0 0 20.2 17"><path d="M0 1.8 H20.2" stroke="#1c1f2b" stroke-width="3"/><path d="M0 7 H9.2 M11 7 H20.2 M0 11.2 H9.2 M11 11.2 H20.2 M0 15.4 H9.2 M11 15.4 H20.2" stroke="#1c1f2b" stroke-width="2.1"/></svg>
<svg style="left:1669.00px;top:795.50px" width="22" height="15" viewBox="0 0 22 15"><rect x="0" y="0" width="21.8" height="14.6" rx="4.8" fill="#1c1f2b"/><path d="M8.6 3.9 L14.4 7.3 L8.6 10.7 Z" fill="#fff"/></svg>
<div class="more" style="left:1705.10px;top:790.00px"><i style="left:4.4px"></i><i style="left:9.9px"></i><i style="left:15.4px"></i></div>
<span class="t" style="font-size:17.6px;color:#1f2430;top:797px;right:147.50px;transform-origin:100% 50%;transform:scaleX(0.9730);">6%</span>
<span class="t" style="font-size:17.6px;color:#1f2430;top:797px;right:18.50px;transform-origin:100% 50%;transform:scaleX(1.0220);">$1.05</span>
<div class="cb" style="left:355px;top:848.0px"></div>
<svg style="left:394px;top:849.6px" width="11" height="16" viewBox="0 0 11 16"><path d="M1.6 1.2 L8.6 8 L1.6 14.8" fill="none" stroke="#5f6c7b" stroke-width="1.9"/></svg>
<span class="t" style="font-size:17.6px;color:#1f2430;top:850px;left:422.00px;transform-origin:0 50%;transform:scaleX(1.0401);">exercise equipment for doors</span>
<div class="db" style="left:980.8px;top:842.1px;border-color:#8fd4b1"></div>
<div class="dot" style="left:995px;top:854.0px;background:#2fa877"></div>
<span class="t" style="font-size:17.6px;color:#1f2430;top:851px;left:1018.20px;transform-origin:0 50%;transform:scaleX(0.9595);">9</span>
<span class="t" style="font-size:17.6px;color:#1f2430;top:851px;right:799.20px;transform-origin:100% 50%;transform:scaleX(1.0559);">210</span>
<svg style="left:0;top:0" width="1" height="1"><polygon points="1286.8,871.0 1286.8,850.1 1295.7,855.1 1304.5,855.1 1313.4,859.5 1322.3,862.7 1331.1,862.7 1340.0,851.0 1348.9,844.0 1357.8,855.1 1366.6,859.5 1375.5,859.5 1384.4,865.8 1384.4,871.0" fill="#e4eefa"/><polyline points="1286.8,850.1 1295.7,855.1 1304.5,855.1 1313.4,859.5 1322.3,862.7 1331.1,862.7 1340.0,851.0 1348.9,844.0 1357.8,855.1 1366.6,859.5 1375.5,859.5 1384.4,865.8" fill="none" stroke="#1f78d6" stroke-width="1.6" stroke-linejoin="round"/></svg>
<div class="ib" style="left:1415.6px;top:844.1px;background:#fce9cc"></div>
<span class="t" style="font-size:13.2px;color:#9a5b08;top:851px;font-weight:700;left:1424.10px;transform-origin:0 50%;transform:scaleX(0.9233);">C</span>
<svg style="left:0;top:0" width="1" height="1"><polygon points="1603.00,847.20 1605.65,854.36 1613.27,854.66 1607.28,859.39 1609.35,866.74 1603.00,862.50 1596.65,866.74 1598.72,859.39 1592.73,854.66 1600.35,854.36" fill="#1c1f2b" stroke="#1c1f2b" stroke-width="0.6" stroke-linejoin="round"/></svg>
<svg style="left:1630.50px;top:849.70px" width="22" height="15" viewBox="0 0 22 15"><rect x="0" y="0" width="21.8" height="14.6" rx="4.8" fill="#1c1f2b"/><path d="M8.6 3.9 L14.4 7.3 L8.6 10.7 Z" fill="#fff"/></svg>
<svg style="left:1669.90px;top:849.50px" width="20.2" height="16" viewBox="0 0 20.2 16"><path d="M0 1.6 H20.2 M0 5.9 H20.2 M0 10.2 H20.2 M0 14.5 H20.2" stroke="#1c1f2b" stroke-width="2.3"/></svg>
<div class="more" style="left:1705.10px;top:844.20px"><i style="left:4.4px"></i><i style="left:9.9px"></i><i style="left:15.4px"></i></div>
<span class="t" style="font-size:17.6px;color:#1f2430;top:851px;right:147.50px;transform-origin:100% 50%;transform:scaleX(0.9938);">10%</span>
<span class="t" style="font-size:17.6px;color:#1f2430;top:851px;right:18.50px;transform-origin:100% 50%;transform:scaleX(1.0220);">$1.38</span>
<div class="cb" style="left:355px;top:902.2px"></div>
<svg style="left:394px;top:903.8px" width="11" height="16" viewBox="0 0 11 16"><path d="M1.6 1.2 L8.6 8 L1.6 14.8" fill="none" stroke="#5f6c7b" stroke-width="1.9"/></svg>
<span class="t" style="font-size:17.6px;color:#1f2430;top:904px;left:422.00px;transform-origin:0 50%;transform:scaleX(1.0342);">gonex portable home gym</span>
<div class="db" style="left:980.8px;top:896.3px;border-color:#8fd4b1"></div>
<div class="dot" style="left:995px;top:908.2px;background:#2fa877"></div>
<span class="t" style="font-size:17.6px;color:#1f2430;top:905px;left:1018.20px;transform-origin:0 50%;transform:scaleX(0.9595);">6</span>
<span class="t" style="font-size:17.6px;color:#1f2430;top:905px;right:799.20px;transform-origin:100% 50%;transform:scaleX(1.0559);">170</span>
<svg style="left:0;top:0" width="1" height="1"><polygon points="1286.8,925.2 1286.8,904.5 1295.7,908.4 1304.5,912.4 1313.4,917.2 1322.3,920.0 1331.1,913.2 1340.0,905.0 1348.9,905.0 1357.8,898.2 1366.6,908.9 1375.5,904.5 1384.4,909.5 1384.4,925.2" fill="#e4eefa"/><polyline points="1286.8,904.5 1295.7,908.4 1304.5,912.4 1313.4,917.2 1322.3,920.0 1331.1,913.2 1340.0,905.0 1348.9,905.0 1357.8,898.2 1366.6,908.9 1375.5,904.5 1384.4,909.5" fill="none" stroke="#1f78d6" stroke-width="1.6" stroke-linejoin="round"/></svg>
<div class="ib" style="left:1415.6px;top:898.3px;background:#d7e5f6"></div>
<span class="t" style="font-size:13.2px;color:#1b3a7c;top:905px;font-weight:700;left:1427.20px;transform-origin:0 50%;transform:scaleX(0.7500);">I</span>
<svg style="left:0;top:0" width="1" height="1"><polygon points="1603.00,901.40 1605.65,908.56 1613.27,908.86 1607.28,913.59 1609.35,920.94 1603.00,916.70 1596.65,920.94 1598.72,913.59 1592.73,908.86 1600.35,908.56" fill="#1c1f2b" stroke="#1c1f2b" stroke-width="0.6" stroke-linejoin="round"/></svg>
<svg style="left:1630.50px;top:903.90px" width="22" height="15" viewBox="0 0 22 15"><rect x="0" y="0" width="21.8" height="14.6" rx="4.8" fill="#1c1f2b"/><path d="M8.6 3.9 L14.4 7.3 L8.6 10.7 Z" fill="#fff"/></svg>
<svg style="left:1670.00px;top:901.40px" width="20" height="20" viewBox="0 0 19 19"><rect x="0" y="0" width="19" height="19" rx="2.4" fill="#1c1f2b"/><path d="M2.6 15 L7 9.6 L10 13.2 L12.6 10.4 L16.4 15 Z" fill="#fff"/></svg>
<span class="t" style="font-size:17.6px;color:#1f2430;top:905px;right:147.50px;transform-origin:100% 50%;transform:scaleX(0.9730);">7%</span>
<span class="t" style="font-size:17.6px;color:#1f2430;top:905px;right:18.50px;transform-origin:100% 50%;transform:scaleX(1.0220);">$0.96</span>
<div class="cb" style="left:355px;top:956.4px"></div>
<svg style="left:394px;top:958.0px" width="11" height="16" viewBox="0 0 11 16"><path d="M1.6 1.2 L8.6 8 L1.6 14.8" fill="none" stroke="#5f6c7b" stroke-width="1.9"/></svg>
<span class="t" style="font-size:17.6px;color:#1f2430;top:958px;left:422.00px;transform-origin:0 50%;transform:scaleX(1.0495);">the fit home gym</span>
<div class="db" style="left:980.8px;top:950.5px;border-color:#8fd4b1"></div>
<div class="dot" style="left:995px;top:962.4px;background:#2fa877"></div>
<span class="t" style="font-size:17.6px;color:#1f2430;top:959px;left:1018.20px;transform-origin:0 50%;transform:scaleX(0.9595);">9</span>
<span class="t" style="font-size:17.6px;color:#1f2430;top:959px;right:799.20px;transform-origin:100% 50%;transform:scaleX(1.0559);">140</span>
<svg style="left:0;top:0" width="1" height="1"><polygon points="1286.8,979.4 1286.8,952.4 1295.7,963.7 1304.5,953.1 1313.4,958.7 1322.3,963.7 1331.1,970.7 1340.0,963.7 1348.9,963.7 1357.8,967.7 1366.6,967.7 1375.5,967.7 1384.4,974.2 1384.4,979.4" fill="#e4eefa"/><polyline points="1286.8,952.4 1295.7,963.7 1304.5,953.1 1313.4,958.7 1322.3,963.7 1331.1,970.7 1340.0,963.7 1348.9,963.7 1357.8,967.7 1366.6,967.7 1375.5,967.7 1384.4,974.2" fill="none" stroke="#1f78d6" stroke-width="1.6" stroke-linejoin="round"/></svg>
<div class="ib" style="left:1415.6px;top:952.5px;background:#e9dbf1"></div>
<span class="t" style="font-size:13.2px;color:#55247f;top:959px;font-weight:700;left:1425.10px;transform-origin:0 50%;transform:scaleX(0.8434);">L</span>
<div class="ib" style="left:1446.6px;top:952.5px;background:#fce9cc"></div>
<span class="t" style="font-size:13.2px;color:#9a5b08;top:959px;font-weight:700;left:1455.10px;transform-origin:0 50%;transform:scaleX(0.9233);">C</span>
<svg style="left:1595.00px;top:954.70px" width="16" height="21.4" viewBox="0 0 15 21" preserveAspectRatio="none"><path d="M7.5 0.3 C3.4 0.3 0.5 3.3 0.5 7.2 C0.5 12 5.6 17.6 7.5 20.6 C9.4 17.6 14.5 12 14.5 7.2 C14.5 3.3 11.6 0.3 7.5 0.3 Z" fill="#1c1f2b"/><circle cx="7.5" cy="7" r="2.5" fill="#fff"/></svg>
<svg style="left:0;top:0" width="1" height="1"><polygon points="1641.50,955.60 1644.15,962.76 1651.77,963.06 1645.78,967.79 1647.85,975.14 1641.50,970.90 1635.15,975.14 1637.22,967.79 1631.23,963.06 1638.85,962.76" fill="#1c1f2b" stroke="#1c1f2b" stroke-width="0.6" stroke-linejoin="round"/></svg>
<svg style="left:1669.90px;top:957.40px" width="20.2" height="17" viewBox="0 0 20.2 17"><path d="M0 1.8 H20.2" stroke="#1c1f2b" stroke-width="3"/><path d="M0 7 H9.2 M11 7 H20.2 M0 11.2 H9.2 M11 11.2 H20.2 M0 15.4 H9.2 M11 15.4 H20.2" stroke="#1c1f2b" stroke-width="2.1"/></svg>
<div class="more" style="left:1705.10px;top:952.60px"><i style="left:4.4px"></i><i style="left:9.9px"></i><i style="left:15.4px"></i></div>
<span class="t" style="font-size:17.6px;color:#1f2430;top:959px;right:147.50px;transform-origin:100% 50%;transform:scaleX(0.9730);">8%</span>
<span class="t" style="font-size:17.6px;color:#1f2430;top:959px;right:18.50px;transform-origin:100% 50%;transform:scaleX(1.0220);">$5.96</span>
<div class="a" style="left:0;top:952px;width:2048px;height:45px;background:linear-gradient(to bottom,rgba(40,40,55,0) 0%,rgba(40,40,55,.035) 50%,rgba(40,40,55,.13) 100%);-webkit-mask-image:linear-gradient(to right,transparent 2%,#000 15%,#000 84%,transparent 99%);mask-image:linear-gradient(to right,transparent 2%,#000 15%,#000 84%,transparent 99%)"></div>
<div class="a" style="left:327px;top:485px;width:1719px;height:516px;border:5px solid #ff2600;border-radius:2px"></div>
</div>
<div class="a" style="left:327px;top:995px;width:1719px;height:5px;background:#ff2600;border-radius:0 0 2px 2px"></div>
</body>
</html>
